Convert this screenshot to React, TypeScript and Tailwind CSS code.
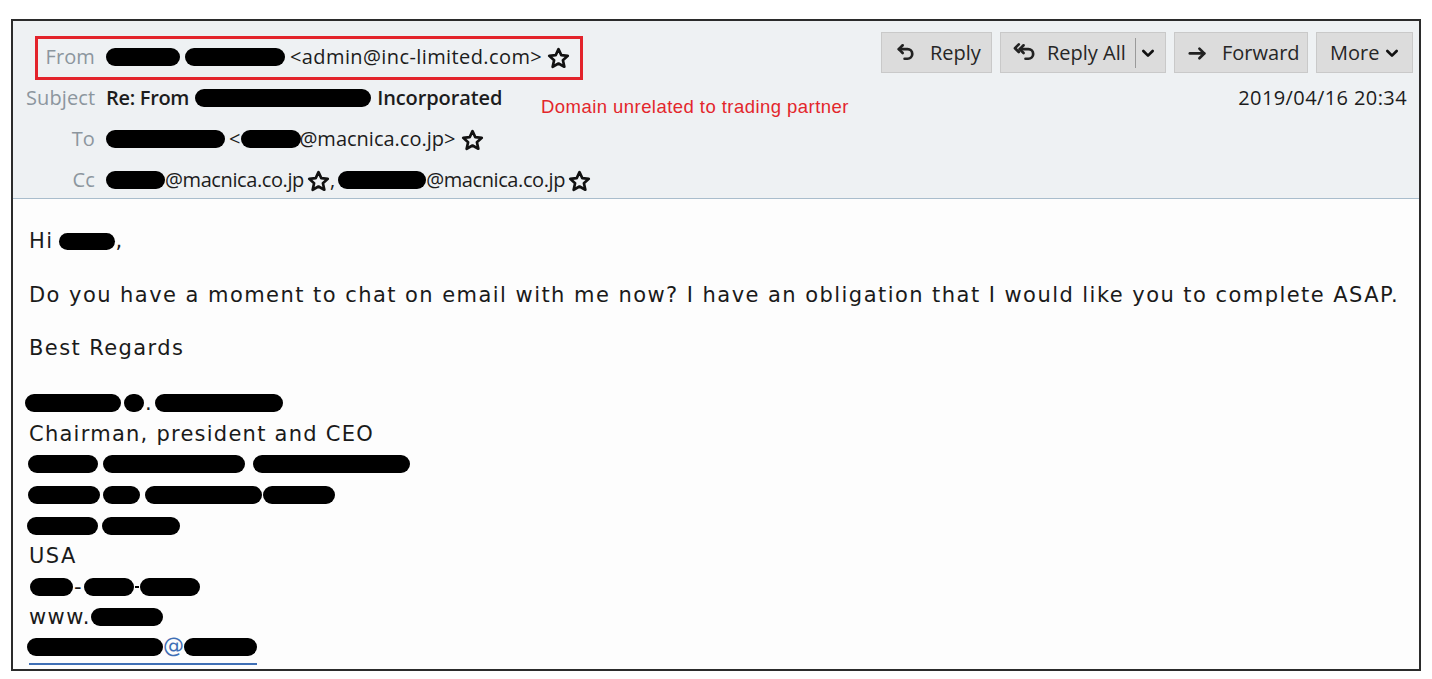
import type { ReactNode } from 'react';

// redaction blot
function Blot({ w, h = 18, className = '' }: { w: number; h?: number; className?: string }) {
  return (
    <span
      className={`inline-block rounded-full bg-black align-middle ${className}`}
      style={{ width: w, height: h }}
    />
  );
}

function StarIcon() {
  return (
    <svg width="23" height="23" viewBox="0 0 24 24" fill="none" stroke="#111" strokeWidth="2.8" strokeLinejoin="round" className="inline-block shrink-0">
      <path d="M12 2.2l2.9 6.3 6.8.7-5.1 4.6 1.5 6.8L12 17.2l-6.1 3.4 1.5-6.8-5.1-4.6 6.8-.7z" />
    </svg>
  );
}

function ReplyIcon() {
  return (
    <svg width="23" height="23" viewBox="0 0 24 24" fill="none" stroke="#222" strokeWidth="2.8" strokeLinecap="round" strokeLinejoin="round">
      <path d="M8 12.5 4 8.5l4-4" />
      <path d="M4 8.5h9a5 5 0 0 1 0 10h-3" />
    </svg>
  );
}

function ReplyAllIcon() {
  return (
    <svg width="27" height="23" viewBox="0 0 28 24" fill="none" stroke="#222" strokeWidth="2.8" strokeLinecap="round" strokeLinejoin="round">
      <path d="M7 11.5 3 7.5l4-4" />
      <path d="M12 12.5 8 8.5l4-4" />
      <path d="M8 8.5h9a5 5 0 0 1 0 10h-3" />
    </svg>
  );
}

function ForwardIcon() {
  return (
    <svg width="23" height="23" viewBox="0 0 24 24" fill="none" stroke="#222" strokeWidth="2.8" strokeLinecap="round" strokeLinejoin="round">
      <path d="M4 13h15" />
      <path d="M14 8l5 5-5 5" />
    </svg>
  );
}

function Chevron() {
  return (
    <svg width="16" height="16" viewBox="0 0 24 24" fill="none" stroke="#111" strokeWidth="4" strokeLinecap="round" strokeLinejoin="round">
      <path d="M5 9l7 7 7-7" />
    </svg>
  );
}

function Row({ label, children }: { label: string; children: ReactNode }) {
  return (
    <div className="flex h-[41px] items-center">
      <span className="w-[69px] shrink-0 text-right tracking-[0.1px] text-[#8c969e]">{label}</span>
      <span className="ml-[11px] flex items-center whitespace-nowrap text-[#1c1c1c]">{children}</span>
    </div>
  );
}

function Btn({ children, className = '' }: { children: ReactNode; className?: string }) {
  return (
    <div className={`flex h-[41px] items-center border border-[#c9c9c9] bg-[#dcdcdc] text-[#262626] ${className}`}>
      {children}
    </div>
  );
}

export default function App() {
  return (
    <div className="min-h-[679px] bg-white pl-[11px] pt-[19px]">
      <div className="flex h-[652px] w-[1410px] flex-col border-2 border-[#2b2b2b] bg-[#fdfdfd]">
        {/* header */}
        <div className="relative flex h-[178px] shrink-0 border-b border-[#a9bdcc] bg-[#eef1f3] font-['Open_Sans',sans-serif] text-[20px]">
          <div className="flex-1 pl-[13px] pt-[15px]">
            <Row label="From">
              <Blot w={74} />
              <Blot w={100} className="ml-[5px]" />
              <span className="ml-[5px] tracking-[0.4px]">&lt;admin@inc-limited.com&gt;</span>
              <span className="ml-[5px]"><StarIcon /></span>
            </Row>
            <Row label="Subject">
              <span className="font-semibold tracking-[-0.3px]">Re: From</span>
              <Blot w={176} className="ml-[6px]" />
              <span className="ml-[6px] font-semibold tracking-[-0.1px]">Incorporated</span>
            </Row>
            <Row label="To">
              <Blot w={119} />
              <span className="ml-[4px]">&lt;</span>
              <Blot w={60} className="ml-[1px]" />
              <span className="-ml-[2px]">@macnica.co.jp&gt;</span>
              <span className="ml-[6px]"><StarIcon /></span>
            </Row>
            <Row label="Cc">
              <Blot w={59} />
              <span className="tracking-[-0.4px]">@macnica.co.jp</span>
              <span className="ml-[3px]"><StarIcon /></span>
              <span>,</span>
              <Blot w={88} className="ml-[3px]" />
              <span className="tracking-[-0.4px]">@macnica.co.jp</span>
              <span className="ml-[3px]"><StarIcon /></span>
            </Row>
          </div>

          <div className="flex flex-col items-end pr-[6px] pt-[11px]">
            <div className="flex gap-[8px]">
              <Btn className="w-[111px] pl-[13px]">
                <ReplyIcon />
                <span className="ml-[12px]">Reply</span>
              </Btn>
              <Btn className="w-[166px] pl-[11px]">
                <ReplyAllIcon />
                <span className="ml-[8px]">Reply All</span>
                <span className="ml-[9px] h-[30px] w-px bg-[#9a9a9a]" />
                <span className="ml-[4px]"><Chevron /></span>
              </Btn>
              <Btn className="w-[134px] pl-[11px]">
                <ForwardIcon />
                <span className="ml-[13px]">Forward</span>
              </Btn>
              <Btn className="w-[97px] pl-[13px]">
                <span>More</span>
                <span className="ml-[5px]"><Chevron /></span>
              </Btn>
            </div>
            <div className="mr-[6px] mt-[13px] leading-[23px] tracking-[0.4px] text-[#1c1c1c]">2019/04/16 20:34</div>
          </div>

          {/* annotation overlay */}
          <div className="pointer-events-none absolute left-[22px] top-[15px] h-[44px] w-[548px] border-[3px] border-[#e3232b]" />
          <div className="absolute left-[528px] top-[72px] font-['Liberation_Sans',Arial,sans-serif] text-[18.5px] tracking-[0.45px] text-[#e3262b]">
            Domain unrelated to trading partner
          </div>
        </div>

        {/* body */}
        <div className="flex-1 pl-[16px] pt-[27px] font-['DejaVu_Sans',Verdana,sans-serif] text-[21px] leading-[30px] tracking-[1.4px] text-[#1a1a1a]">
          <p className="flex items-center">
            Hi <Blot w={56} h={17} className="ml-[6px]" />,
          </p>
          <p className="mt-[24px] whitespace-nowrap tracking-[1.45px]">
            Do you have a moment to chat on email with me now? I have an obligation that I would like you to complete ASAP.
          </p>
          <p className="mt-[23px]">Best Regards</p>

          <div className="mt-[25px] leading-[30.6px]">
            <div className="flex h-[30.6px] items-center">
              <Blot w={96} className="-ml-[4px]" />
              <Blot w={20} className="ml-[3px]" />
              <span className="ml-[1px]">.</span>
              <Blot w={128} className="ml-[2px]" />
            </div>
            <div className="tracking-[1.25px]">Chairman, president and CEO</div>
            <div className="flex h-[30.6px] items-center">
              <Blot w={70} className="-ml-[1px]" />
              <Blot w={142} className="ml-[5px]" />
              <Blot w={157} className="ml-[8px]" />
            </div>
            <div className="flex h-[30.6px] items-center">
              <Blot w={72} className="-ml-[1px]" />
              <Blot w={37} className="ml-[3px]" />
              <Blot w={117} className="ml-[5px]" />
              <Blot w={72} className="ml-[1px]" />
            </div>
            <div className="flex h-[30.6px] items-center">
              <Blot w={71} className="-ml-[2px]" />
              <Blot w={78} className="ml-[4px]" />
            </div>
            <div>USA</div>
            <div className="flex h-[30.6px] items-center">
              <Blot w={43} className="ml-[1px]" />
              <span className="mx-[1px]">-</span>
              <Blot w={50} />
              <span className="mx-[1px] inline-block h-[2px] w-[4px] bg-black" />
              <Blot w={60} />
            </div>
            <div className="flex h-[30.6px] items-center">
              www.<Blot w={72} />
            </div>
            <div className="flex h-[30.6px] items-center">
              <span className="flex items-center border-b-2 border-[#3f6fb5] pb-[1px] tracking-normal">
                <Blot w={136} className="-ml-[2px]" />
                <span className="text-[#3f6fb5]">@</span>
                <Blot w={73} />
              </span>
            </div>
          </div>
        </div>
      </div>
    </div>
  );
}
